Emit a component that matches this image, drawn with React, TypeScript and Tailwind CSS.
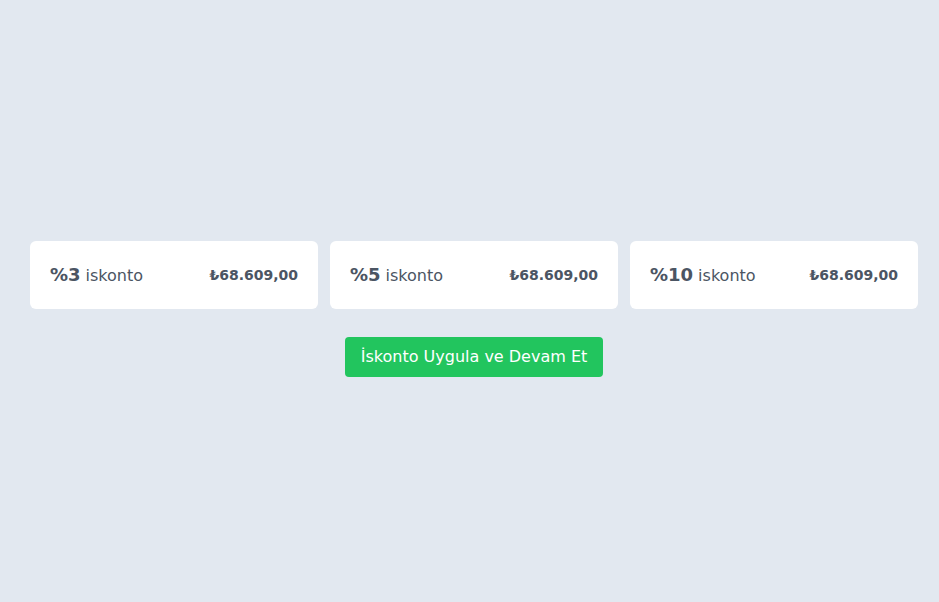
const options = [
  { rate: 3, price: '₺68.609,00' },
  { rate: 5, price: '₺68.609,00' },
  { rate: 10, price: '₺68.609,00' },
]

export default function App() {
  return (
    <div
      className="min-h-[602px] w-full bg-[#e2e8f0] flex flex-col justify-center pl-[30px] pr-[21px] pt-[16px]"
      style={{ fontFamily: '"DejaVu Sans", sans-serif' }}
    >
      <div className="grid grid-cols-3 gap-3">
        {options.map((o) => (
          <div
            key={o.rate}
            className="bg-white rounded-md h-[68px] px-5 flex items-center justify-between"
          >
            <div className="text-[#4b5563] flex items-baseline gap-[5px]">
              <span className="text-lg font-bold">%{o.rate}</span>
              <span className="text-base">iskonto</span>
            </div>
            <span className="text-sm font-bold text-[#4b5563]">{o.price}</span>
          </div>
        ))}
      </div>
      <div className="flex justify-center mt-[28px]">
        <button className="bg-[#22c55e] text-white text-base h-10 px-4 rounded">
          İskonto Uygula ve Devam Et
        </button>
      </div>
    </div>
  )
}
